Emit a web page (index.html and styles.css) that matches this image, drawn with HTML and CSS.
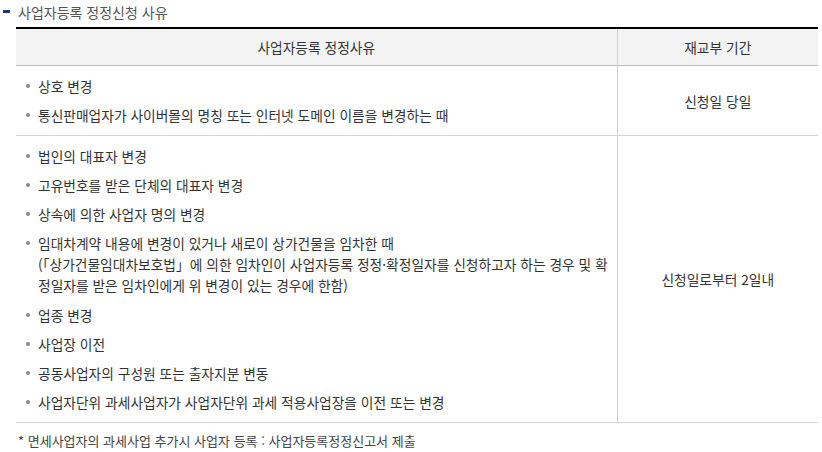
FILE: index.html
```html
<!DOCTYPE html>
<html lang="ko">
<head>
<meta charset="utf-8">
<link rel="stylesheet" href="styles.css">
</head>
<body>
<div class="page">
  <h3 class="title"><span class="dash"></span>사업자등록 정정신청 사유</h3>
  <table class="tbl">
    <colgroup><col class="c1"><col class="c2"></colgroup>
    <thead>
      <tr><th>사업자등록 정정사유</th><th class="last">재교부 기간</th></tr>
    </thead>
    <tbody>
      <tr>
        <td>
          <ul class="list">
            <li>상호 변경</li>
            <li>통신판매업자가 사이버몰의 명칭 또는 인터넷 도메인 이름을 변경하는 때</li>
          </ul>
        </td>
        <td class="period">신청일 당일</td>
      </tr>
      <tr>
        <td>
          <ul class="list">
            <li>법인의 대표자 변경</li>
            <li>고유번호를 받은 단체의 대표자 변경</li>
            <li>상속에 의한 사업자 명의 변경</li>
            <li class="multi-item"><span class="multi">임대차계약 내용에 변경이 있거나 새로이 상가건물을 임차한 때<br>(「상가건물임대차보호법」에 의한 임차인이 사업자등록 정정·확정일자를 신청하고자 하는 경우 및 확<br>정일자를 받은 임차인에게 위 변경이 있는 경우에 한함)</span></li>
            <li>업종 변경</li>
            <li>사업장 이전</li>
            <li>공동사업자의 구성원 또는 출자지분 변동</li>
            <li>사업자단위 과세사업자가 사업자단위 과세 적용사업장을 이전 또는 변경</li>
          </ul>
        </td>
        <td class="period">신청일로부터 2일내</td>
      </tr>
    </tbody>
  </table>
  <p class="note">* 면세사업자의 과세사업 추가시 사업자 등록 : 사업자등록정정신고서 제출</p>
</div>
</body>
</html>
```

FILE: styles.css
```css
html, body {
  margin: 0;
  padding: 0;
  background: #fff;
}
body {
  font-family: "Noto Sans CJK KR", "Noto Sans", sans-serif;
  color: #333;
  font-size: 13.75px;
}
.page {
  width: 822px;
}
.title {
  margin: 0;
  height: 27px;
  display: flex;
  align-items: center;
  padding: 0 0 4px 3px;
  box-sizing: border-box;
  font-size: 14px;
  font-weight: normal;
  color: #555;
  line-height: 20px;
}
.dash {
  display: inline-block;
  width: 7px;
  height: 3px;
  background: #1b3d6d;
  margin-right: 8px;
}
.tbl {
  margin-left: 16px;
  width: 802px;
  border-collapse: collapse;
  border-top: 2px solid #000;
  table-layout: fixed;
}
.c1 { width: 601px; }
.c2 { width: 201px; }
.tbl th {
  height: 36px;
  padding: 0;
  background: #f3f3f3;
  font-weight: normal;
  color: #333;
  font-size: 13.75px;
  border-bottom: 1px solid #bdbdbd;
  border-right: 1px solid #d0d0d0;
  text-align: center;
  vertical-align: middle;
}
.tbl th.last { border-right: none; }
.tbl td {
  padding: 10px 0 10px 10px;
  border-bottom: 1px solid #d4d4d4;
  border-right: 1px solid #d0d0d0;
  vertical-align: middle;
}
.tbl td.period {
  border-right: none;
  padding: 0;
  text-align: center;
}
.list {
  list-style: none;
  margin: 0;
  padding: 0;
}
.list li {
  display: flex;
  align-items: flex-start;
  line-height: 20px;
}
.list li + li { margin-top: 9px; }
.list li::before {
  content: "";
  flex: 0 0 auto;
  width: 4px;
  height: 4px;
  border-radius: 50%;
  background: #888;
  margin: 8px 8px 0 0;
}
.list li.multi-item {
  line-height: 21px;
}
.multi {
  white-space: nowrap;
}
.note {
  margin: 9px 0 0 18px;
  font-size: 13px;
  color: #444;
  line-height: 18px;
}
```
